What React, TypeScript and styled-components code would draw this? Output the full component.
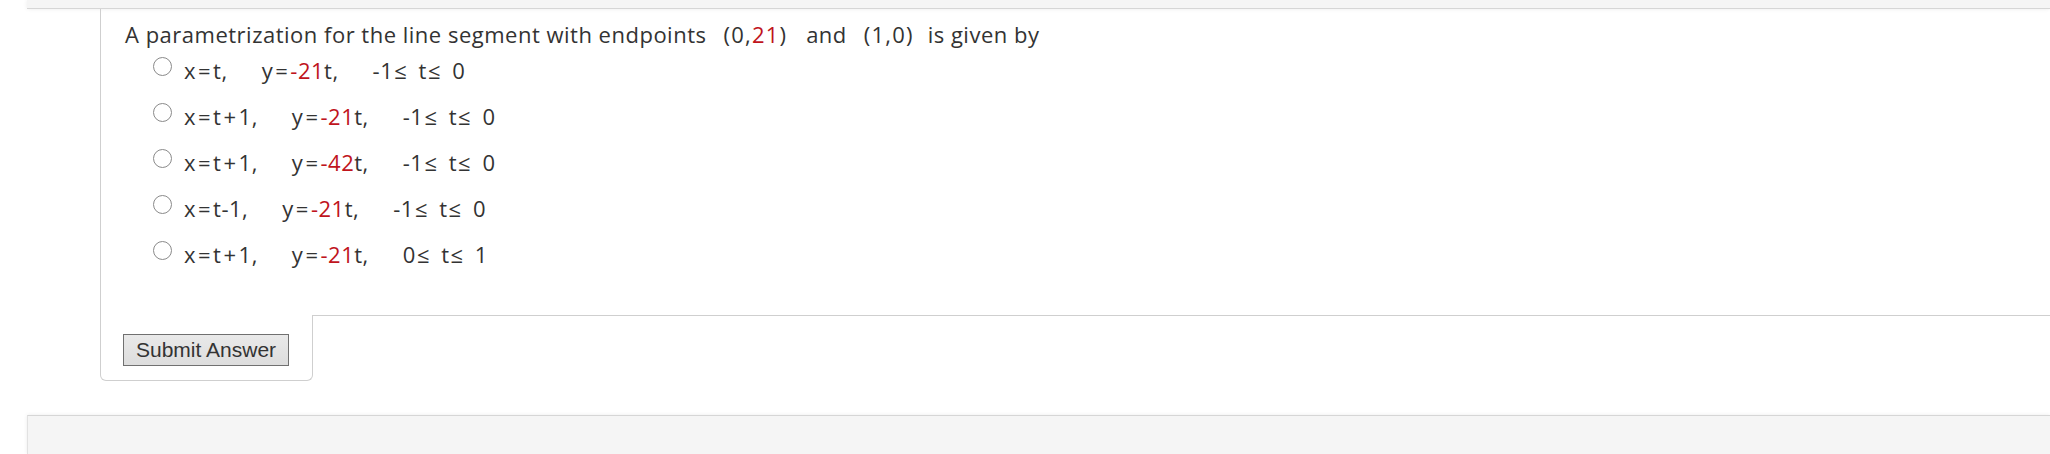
import React from 'react';
import styled, { createGlobalStyle } from 'styled-components';

const GlobalStyle = createGlobalStyle`
  html, body {
    margin: 0;
    padding: 0;
    background: #fff;
  }
  body {
    font-family: "Open Sans", "DejaVu Sans", sans-serif;
    color: #333;
  }
`;

const Page = styled.div`
  width: 2050px;
  height: 454px;
  overflow: hidden;
  display: flex;
  flex-direction: column;
`;

const CardEdge = styled.div<{ $bottom?: boolean }>`
  margin-left: 27px;
  background: #f5f5f5;
  box-shadow: 0 0 4px rgba(0, 0, 0, 0.08);
  ${(p) =>
    p.$bottom
      ? `height: 40px; border-top: 1px solid #d6d6d6; border-left: 1px solid #e2e2e2; margin-top: 34px;`
      : `height: 9px; border-bottom: 1px solid #d6d6d6;`}
`;

const Problem = styled.div`
  margin-left: 100px;
  display: flex;
  flex-direction: column;
`;

const QuestionBody = styled.div`
  border-left: 1px solid #cfcfcf;
  padding: 10px 0 0 24px;
  height: 306px;
  box-sizing: border-box;
  font-size: 22px;
  line-height: 30px;
  letter-spacing: 0.5px;
`;

const Prompt = styled.div`
  white-space: nowrap;
`;

const MathChunk = styled.span<{ $after: number }>`
  margin: 0 ${(p) => p.$after}px 0 17px;
  letter-spacing: 1.2px;
`;

const Red = styled.span`
  color: #c0141c;
`;

const Op = styled.span<{ $rel?: boolean }>`
  margin: ${(p) => (p.$rel ? '0 5px 0 1px' : '0 2px')};
`;

const Options = styled.div`
  margin: 6px 0 0 28px;
  display: flex;
  flex-direction: column;
  gap: 16px;
`;

const OptionRow = styled.label`
  display: flex;
  align-items: flex-start;
  white-space: pre;
`;

const Radio = styled.input.attrs({ type: 'radio' })`
  appearance: none;
  width: 19px;
  height: 19px;
  margin: 2px 12px 0 0;
  border: 1.5px solid #8a8a8a;
  border-radius: 50%;
  background: #fff;
  box-sizing: border-box;
`;

const Segment = styled.span`
  & + & {
    margin-left: 34px;
  }
`;

const Footer = styled.div`
  display: flex;
`;

const ButtonTab = styled.div`
  width: 213px;
  height: 66px;
  box-sizing: border-box;
  border: 1px solid #cfcfcf;
  border-top: none;
  border-radius: 0 0 6px 6px;
  padding: 19px 0 0 22px;
`;

const Filler = styled.div`
  flex: 1;
  align-self: flex-start;
  border-top: 1px solid #cfcfcf;
`;

const SubmitButton = styled.button`
  font-family: "Liberation Sans", Arial, sans-serif;
  font-size: 21px;
  color: #333;
  height: 32px;
  padding: 0 12px;
  border: 1px solid #707070;
  border-radius: 0;
  background: linear-gradient(#e9e9e9, #dddddd);
  cursor: pointer;
`;

type Opt = { x: string[]; y: string; range: [string, string] };

const options: Opt[] = [
  { x: ['t'], y: '21', range: ['-1', '0'] },
  { x: ['t', '1'], y: '21', range: ['-1', '0'] },
  { x: ['t', '1'], y: '42', range: ['-1', '0'] },
  { x: ['t-1'], y: '21', range: ['-1', '0'] },
  { x: ['t', '1'], y: '21', range: ['0', '1'] },
];

export default function App() {
  return (
    <Page>
      <GlobalStyle />
      <CardEdge />
      <Problem>
        <QuestionBody>
          <Prompt>
            A parametrization for the line segment with endpoints
            <MathChunk $after={19}>
              (0,<Red>21</Red>)
            </MathChunk>
            and
            <MathChunk $after={14}>(1,0)</MathChunk>
            is given by
          </Prompt>
          <Options>
            {options.map((o, i) => (
              <OptionRow key={i}>
                <Radio name="ans" />
                <Segment>
                  x<Op>=</Op>
                  {o.x[0]}
                  {o.x.length > 1 && (
                    <>
                      <Op>+</Op>
                      {o.x[1]}
                    </>
                  )}
                  ,
                </Segment>
                <Segment>
                  y<Op>=</Op>
                  <Red>-{o.y}</Red>t,
                </Segment>
                <Segment>
                  {o.range[0]}
                  <Op $rel>≤</Op>
                  {' t'}
                  <Op $rel>≤</Op>
                  {' ' + o.range[1]}
                </Segment>
              </OptionRow>
            ))}
          </Options>
        </QuestionBody>
        <Footer>
          <ButtonTab>
            <SubmitButton>Submit Answer</SubmitButton>
          </ButtonTab>
          <Filler />
        </Footer>
      </Problem>
      <CardEdge $bottom />
    </Page>
  );
}
